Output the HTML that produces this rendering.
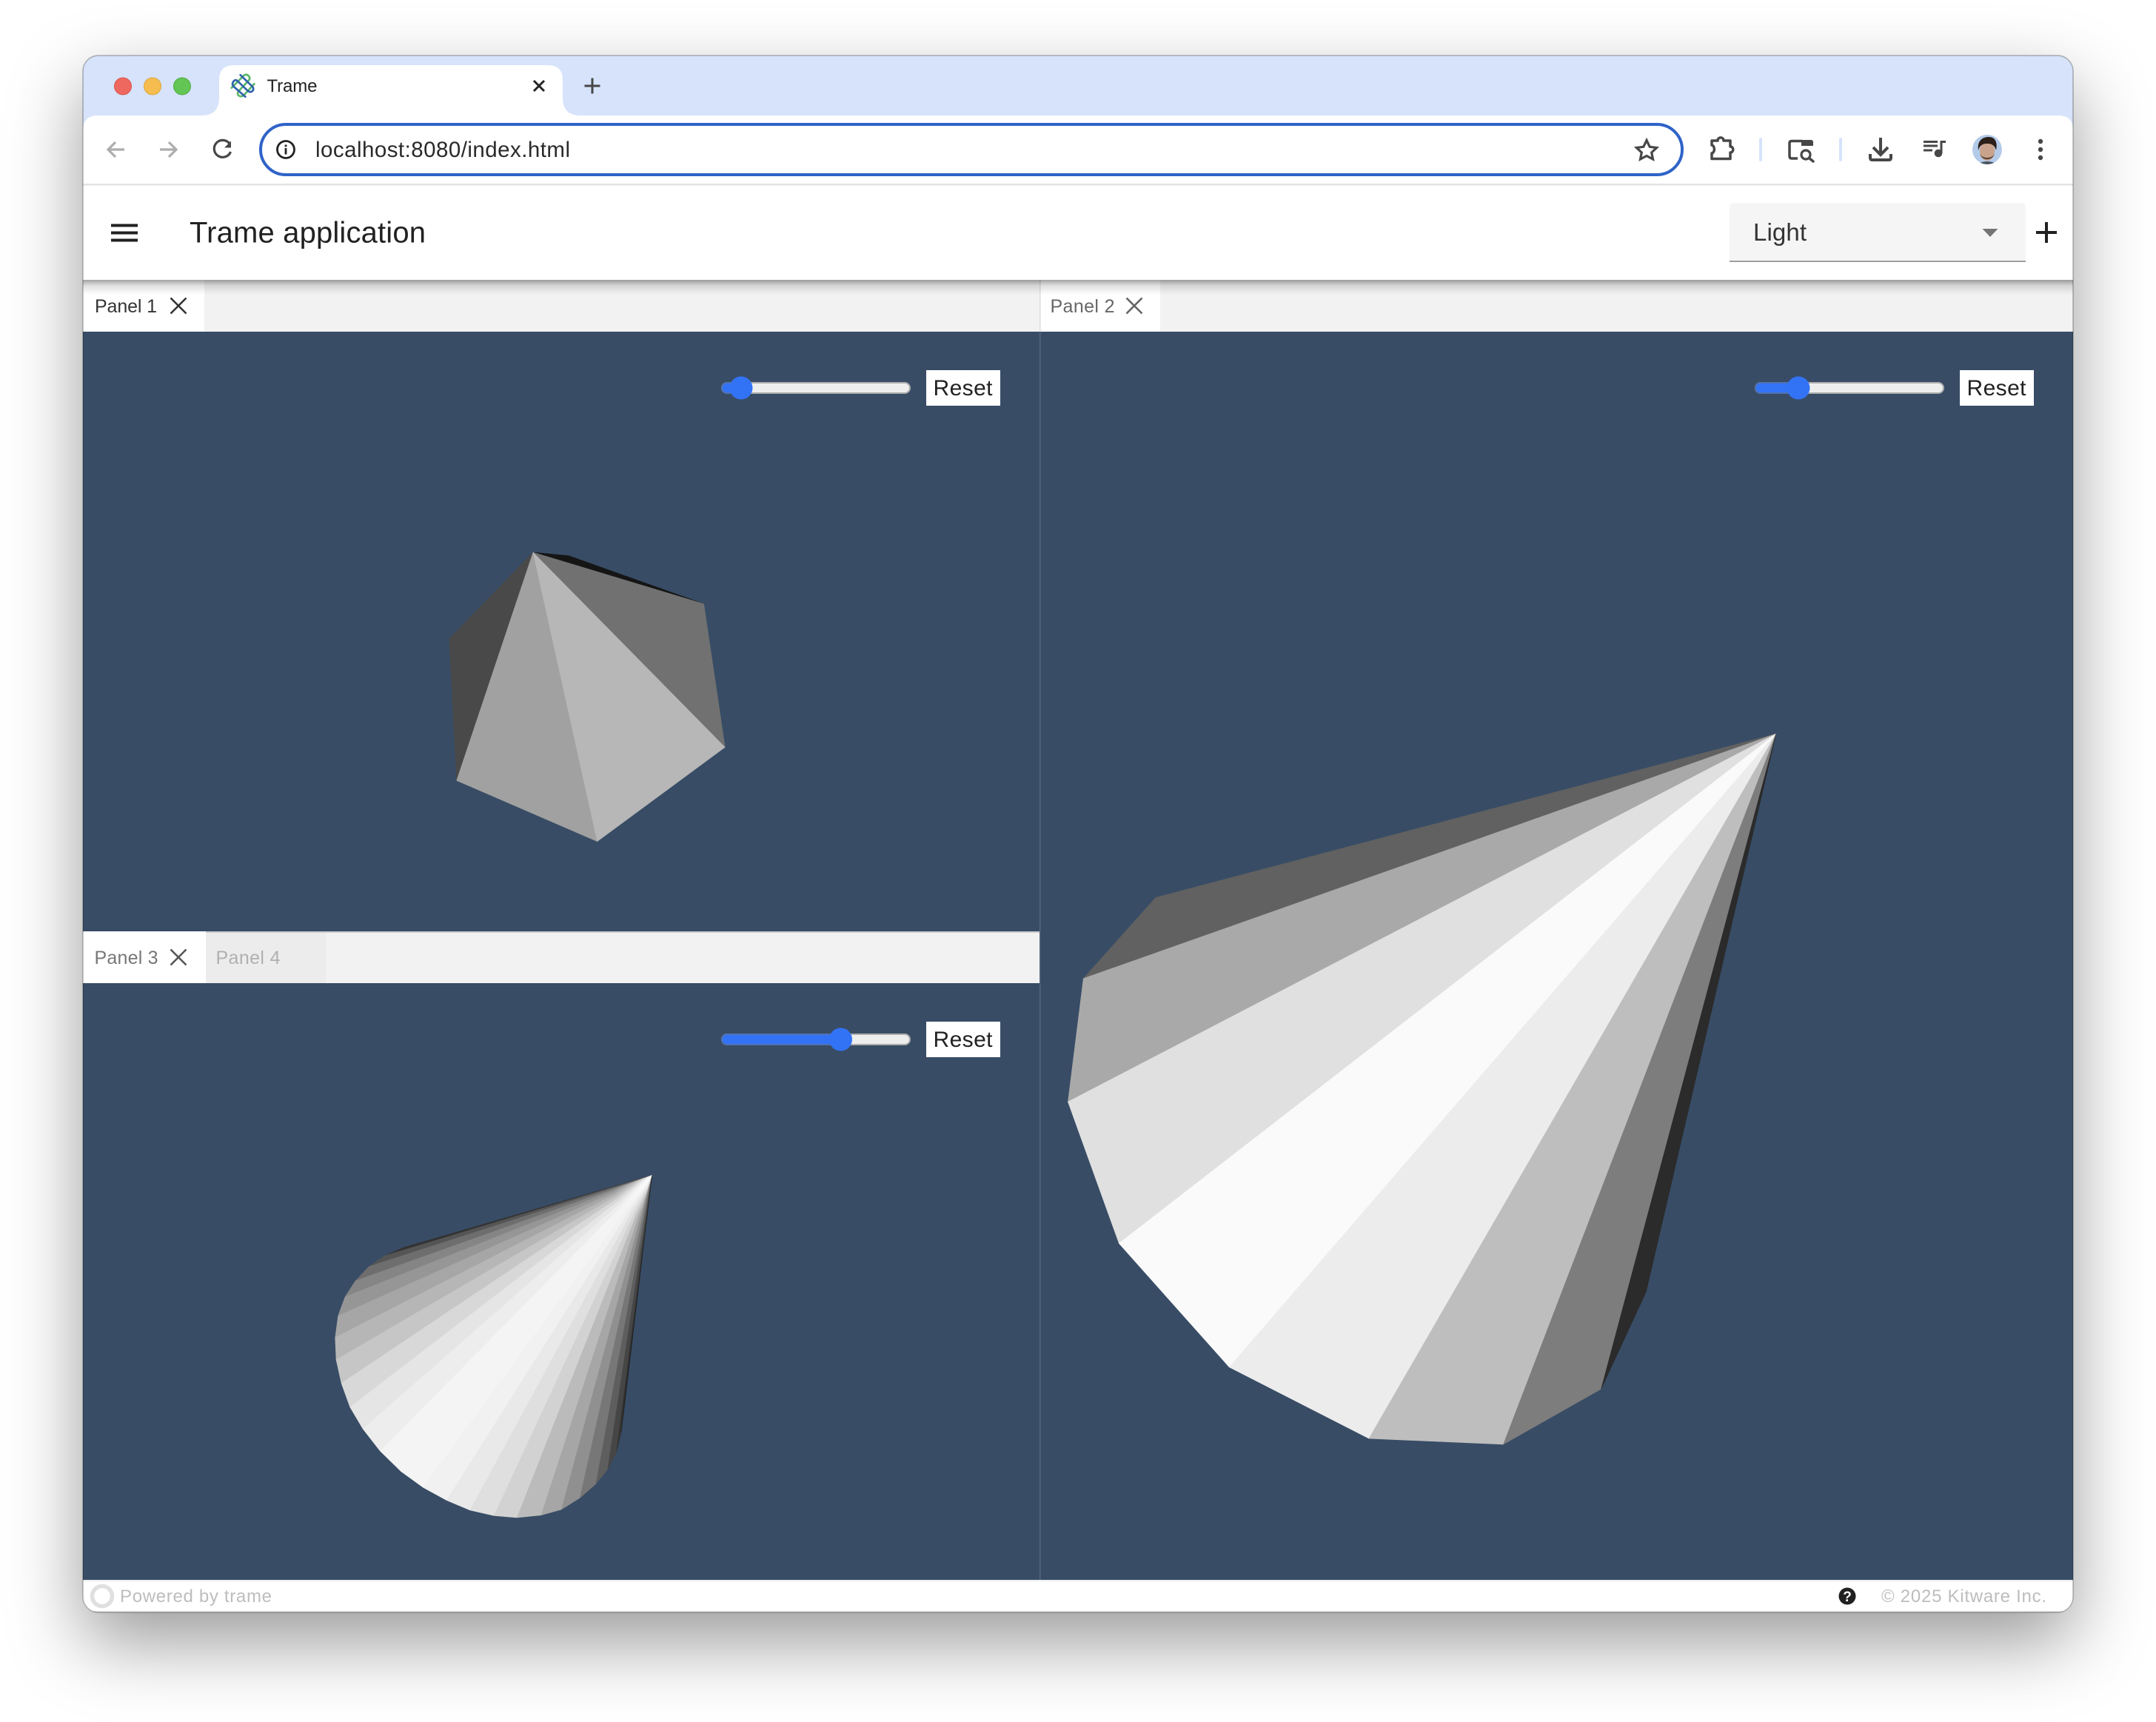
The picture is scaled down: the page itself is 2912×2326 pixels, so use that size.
<!DOCTYPE html>
<html lang="en"><head><meta charset="utf-8"><title>Trame</title>
<style>
html,body{margin:0;padding:0;background:#fff;width:2912px;height:2326px;overflow:hidden}
#sh{position:absolute;left:112px;top:75px;width:2688px;height:2103px;border-radius:20px;box-shadow:0 40px 100px 0 rgba(0,0,0,.4)}
svg{position:absolute;left:0;top:0;display:block}
text{font-family:"Liberation Sans",sans-serif}
</style></head><body>
<div id="sh"></div>
<svg width="2912" height="2326" viewBox="0 0 2912 2326" xmlns="http://www.w3.org/2000/svg">
<defs>
<clipPath id="win"><rect x="112" y="75" width="2688" height="2103" rx="21"/></clipPath>
<linearGradient id="ab" x1="0" y1="0" x2="0" y2="1"><stop offset="0" stop-color="#000" stop-opacity=".36"/><stop offset=".4" stop-color="#000" stop-opacity=".12"/><stop offset="1" stop-color="#000" stop-opacity="0"/></linearGradient>
<radialGradient id="apex" gradientUnits="userSpaceOnUse" cx="1352" cy="82" r="170"><stop offset="0" stop-color="#fff" stop-opacity=".9"/><stop offset=".5" stop-color="#fff" stop-opacity=".3"/><stop offset="1" stop-color="#fff" stop-opacity="0"/></radialGradient>
<clipPath id="ac"><circle cx="2684" cy="202" r="20"/></clipPath>
</defs>
<g clip-path="url(#win)">
<rect x="112" y="75" width="2688" height="2103" fill="#d6e3fa"/>
<!-- toolbar -->
<path d="M112 176 Q112 156 132 156 H2780 Q2800 156 2800 176 V250 H112 Z" fill="#fff"/>
<rect x="112" y="248" width="2688" height="2.5" fill="#e3e3e3"/>
<!-- tab -->
<path d="M272 156 Q296 156 296 132 V108 Q296 88 316 88 H740 Q760 88 760 108 V132 Q760 156 784 156 Z" fill="#fff"/>
<!-- traffic lights -->
<circle cx="166" cy="116.500" r="11.500" fill="#ee685f" stroke="#d9564e" stroke-width="1"/>
<circle cx="206" cy="116.500" r="11.500" fill="#f5bd4f" stroke="#dfa53c" stroke-width="1"/>
<circle cx="246" cy="116.500" r="11.500" fill="#62c554" stroke="#50ad45" stroke-width="1"/>
<!-- favicon -->
<g transform="translate(300 80) scale(.3333)" fill="none" stroke-width="8" stroke-linecap="round">
<path d="M38 116 L88 66 Q98 58 108 68 Q116 78 106 88 L68 128 Q58 140 68 148 Q78 154 88 146 L130 100" stroke="#5bb765"/>
<path d="M74 64 L124 112 Q130 122 122 130 Q114 136 104 128 L62 88 Q54 80 46 90 Q38 100 46 110 L94 152" stroke="#2f62ad"/>
</g>
<text x="360.500" y="124" font-size="24" fill="#222" textLength="68">Trame</text>
<path d="M721 109 L735 123 M735 109 L721 123" stroke="#222" stroke-width="3" fill="none"/>
<path d="M800 105.500 V126.500 M789.500 116 H810.500" stroke="#474747" stroke-width="3" fill="none"/>
<!-- nav -->
<path d="M168 202 H146 M156 192 L146 202 L156 212" stroke="#adadad" stroke-width="3.200" fill="none"/>
<path d="M216 202 H238 M228 192 L238 202 L228 212" stroke="#adadad" stroke-width="3.200" fill="none"/>
<path d="M310 194 A11.500 11.500 0 1 0 311.500 205" stroke="#474747" stroke-width="3.200" fill="none"/>
<path d="M312 190.500 V199.500 H303 Z" fill="#474747"/>
<!-- url -->
<rect x="352" y="168" width="1920" height="68" rx="34" fill="#fff" stroke="#2f63c9" stroke-width="4"/>
<circle cx="386" cy="202" r="11.500" fill="none" stroke="#222" stroke-width="2.800"/>
<rect x="384.600" y="200" width="2.800" height="8.500" fill="#222"/><rect x="384.600" y="195.500" width="2.800" height="2.800" fill="#222"/>
<text x="426" y="212" font-size="29.500" fill="#2a2a2a" textLength="344">localhost:8080/index.html</text>
<path d="M2224 189.500 L2228.200 198.300 L2237.600 199.500 L2230.700 206 L2232.500 215 L2224 210.500 L2215.500 215 L2217.300 206 L2210.400 199.500 L2219.800 198.300 Z" fill="none" stroke="#474747" stroke-width="3.200" stroke-linejoin="miter"/>
<!-- toolbar icons -->
<path d="M2312 190 H2320 C2320 184.500 2328 184.500 2328 190 H2337 V198 C2342 198 2342 206 2337 206 V214.500 H2312 V207 C2316.500 206 2316.500 197 2312 196 Z" fill="none" stroke="#474747" stroke-width="3.500" stroke-linejoin="round"/>
<rect x="2376" y="186" width="4" height="32" rx="2" fill="#d6e3fa"/>
<path d="M2428 214 H2420 Q2417 214 2417 211 V193 Q2417 190.500 2420 190.500 H2434" fill="none" stroke="#474747" stroke-width="3.500"/>
<path d="M2433 189 H2446 Q2449 189 2449 192 V197 H2433 Z" fill="#474747"/>
<circle cx="2439" cy="209" r="6" fill="none" stroke="#474747" stroke-width="3.200"/>
<path d="M2443.500 213.500 L2449 218" stroke="#474747" stroke-width="3.500" stroke-linecap="round"/>
<rect x="2484" y="186" width="4" height="32" rx="2" fill="#d6e3fa"/>
<path d="M2540 186 V208 M2530 199 L2540 209 L2550 199" fill="none" stroke="#474747" stroke-width="4"/>
<path d="M2526 208 V213 Q2526 216 2529 216 H2551 Q2554 216 2554 213 V208" fill="none" stroke="#474747" stroke-width="4"/>
<path d="M2598 191.500 H2617 M2598 197 H2617 M2598 203 H2610" stroke="#474747" stroke-width="3" fill="none"/>
<circle cx="2618" cy="207" r="5.300" fill="#474747"/>
<path d="M2622 207 V191.500 H2628" fill="none" stroke="#474747" stroke-width="3"/>
<g clip-path="url(#ac)">
<rect x="2664" y="182" width="40" height="40" fill="#b4cae9"/>
<ellipse cx="2684" cy="204" rx="10" ry="13" fill="#c9a38c"/>
<path d="M2672 203 C2670 188 2680 185 2686 185 C2696 185 2698 194 2696 203 C2694 196 2690 194 2684 194 C2678 194 2674 196 2672 203 Z" fill="#2a2019"/>
<path d="M2674 207 C2676 218 2692 218 2694 207 C2692 215 2676 215 2674 207 Z" fill="#5a4535"/>
<path d="M2670 222 Q2684 214 2698 222 Z" fill="#4a5561"/>
</g>
<circle cx="2756" cy="191" r="3.200" fill="#474747"/><circle cx="2756" cy="202" r="3.200" fill="#474747"/><circle cx="2756" cy="213" r="3.200" fill="#474747"/>
<!-- app bar -->
<rect x="112" y="250.500" width="2688" height="128" fill="#fff"/>
<path d="M150 302.500 H186 V306.500 H150 Z M150 312.500 H186 V316.500 H150 Z M150 322.500 H186 V326.500 H150 Z" fill="#212121"/>
<text x="256" y="327.500" font-size="40" fill="#212121" textLength="319">Trame application</text>
<path d="M2336 282 Q2336 274 2344 274 H2728 Q2736 274 2736 282 V354 H2336 Z" fill="#f5f5f5"/>
<rect x="2336" y="352" width="400" height="2" fill="#9e9e9e"/>
<text x="2368" y="325" font-size="33" fill="#333" textLength="72">Light</text>
<path d="M2677.500 309 H2698.500 L2688 320 Z" fill="#757575"/>
<path d="M2764 300 V328 M2750 314 H2778" stroke="#212121" stroke-width="4" fill="none"/>
<!-- panels -->
<rect x="112" y="378" width="2688" height="70" fill="#f2f2f2"/>
<rect x="112" y="378" width="164" height="70" fill="#fff"/>
<rect x="1405" y="378" width="162" height="70" fill="#fff"/>
<rect x="1404" y="378" width="1.500" height="70" fill="#ddd"/>
<text x="128" y="422" font-size="25" fill="#333" textLength="84">Panel 1</text>
<path d="M230.500 402.500 L251.500 423.500 M251.500 402.500 L230.500 423.500" stroke="#333" stroke-width="2.600" fill="none"/>
<text x="1418.500" y="422" font-size="25" fill="#666" textLength="87">Panel 2</text>
<path d="M1521.500 402.500 L1542.500 423.500 M1542.500 402.500 L1521.500 423.500" stroke="#666" stroke-width="2.600" fill="none"/>
<rect x="112" y="378" width="2688" height="20" fill="url(#ab)"/>
<rect x="112" y="448" width="2688" height="1686" fill="#384c65"/>
<rect x="1404" y="448" width="1.500" height="1686" fill="#54667c"/>
<!-- panel 3 tabs -->
<rect x="112" y="1258" width="1292" height="70" fill="#f2f2f2"/>
<rect x="112" y="1258" width="1292" height="2" fill="#cbcbcb"/>
<rect x="112" y="1258" width="166" height="70" fill="#fff"/>
<rect x="278" y="1260" width="162" height="68" fill="#ececec"/>
<text x="127.500" y="1302" font-size="25" fill="#777" textLength="86">Panel 3</text>
<path d="M230.500 1282.500 L251.500 1303.500 M251.500 1282.500 L230.500 1303.500" stroke="#555" stroke-width="2.600" fill="none"/>
<text x="291.500" y="1302" font-size="25" fill="#b0b0b0" textLength="87">Panel 4</text>
<!-- sliders -->
<g id="s1">
<rect x="975" y="517" width="254" height="14" rx="7" fill="#eee" stroke="#adadad" stroke-width="2"/>
<path d="M982 517 H1001 V531 H982 A7 7 0 0 1 982 517 Z" fill="#3273f6" stroke="#4f72b4" stroke-width="2"/>
<circle cx="1001" cy="524" r="15.500" fill="#3273f6"/>
<rect x="1251" y="500" width="100" height="48" fill="#fff"/>
<text x="1260.500" y="534" font-size="30" fill="#222" textLength="80">Reset</text>
</g>
<g transform="translate(1396 0)">
<rect x="975" y="517" width="254" height="14" rx="7" fill="#eee" stroke="#adadad" stroke-width="2"/>
<path d="M982 517 H1033 V531 H982 A7 7 0 0 1 982 517 Z" fill="#3273f6" stroke="#4f72b4" stroke-width="2"/>
<circle cx="1033" cy="524" r="15.500" fill="#3273f6"/>
<rect x="1251" y="500" width="100" height="48" fill="#fff"/>
<text x="1260.500" y="534" font-size="30" fill="#222" textLength="80">Reset</text>
</g>
<g transform="translate(0 880)">
<rect x="975" y="517" width="254" height="14" rx="7" fill="#eee" stroke="#adadad" stroke-width="2"/>
<path d="M982 517 H1135 V531 H982 A7 7 0 0 1 982 517 Z" fill="#3273f6" stroke="#4f72b4" stroke-width="2"/>
<circle cx="1135.500" cy="524" r="15.500" fill="#3273f6"/>
<rect x="1251" y="500" width="100" height="48" fill="#fff"/>
<text x="1260.500" y="534" font-size="30" fill="#222" textLength="80">Reset</text>
</g>
<!-- panel 1 shape -->
<g transform="translate(560 720) scale(.33333)" stroke-width="1.500" stroke-linejoin="round">
<polygon points="480,78 1172,287 625,92" fill="#151515" stroke="#151515"/>
<polygon points="480,78 140,428 170,1003" fill="#494949" stroke="#494949"/>
<polygon points="480,78 1258,868 1172,287" fill="#717171" stroke="#717171"/>
<polygon points="480,78 170,1003 740,1250" fill="#a1a1a1" stroke="#a1a1a1"/>
<polygon points="480,78 740,1250 1258,868" fill="#b7b7b7" stroke="#b7b7b7"/>
</g>
<!-- panel 2 shape -->
<g transform="translate(1421 960) scale(.6506)" stroke-width="1" stroke-linejoin="round">
<polygon points="1503,48 215,388 65,556" fill="#616161" stroke="#616161"/>
<polygon points="1503,48 65,556 33,812" fill="#a9a9a9" stroke="#a9a9a9"/>
<polygon points="1503,48 33,812 139,1106" fill="#e0e0e0" stroke="#e0e0e0"/>
<polygon points="1503,48 139,1106 368,1363" fill="#fafafa" stroke="#fafafa"/>
<polygon points="1503,48 368,1363 658,1511" fill="#ececec" stroke="#ececec"/>
<polygon points="1503,48 658,1511 937,1523" fill="#bebebe" stroke="#bebebe"/>
<polygon points="1503,48 937,1523 1140,1408" fill="#7d7d7d" stroke="#7d7d7d"/>
<polygon points="1503,48 1140,1408 1233,1207" fill="#2b2b2b" stroke="#2b2b2b"/>
</g>
<!-- panel 3 shape -->
<g transform="translate(430 1560) scale(.33333)" stroke-width="1.500" stroke-linejoin="round">
<polygon points="1352,82 345,375 270,408" fill="#333" stroke="#333"/>
<polygon points="1352,82 270,408 205,452" fill="#555" stroke="#555"/>
<polygon points="1352,82 205,452 150,510" fill="#6e6e6e" stroke="#6e6e6e"/>
<polygon points="1352,82 150,510 108,575" fill="#858585" stroke="#858585"/>
<polygon points="1352,82 108,575 80,652" fill="#969696" stroke="#969696"/>
<polygon points="1352,82 80,652 68,740" fill="#a6a6a6" stroke="#a6a6a6"/>
<polygon points="1352,82 68,740 72,830" fill="#b6b6b6" stroke="#b6b6b6"/>
<polygon points="1352,82 72,830 93,925" fill="#c6c6c6" stroke="#c6c6c6"/>
<polygon points="1352,82 93,925 128,1022" fill="#d8d8d8" stroke="#d8d8d8"/>
<polygon points="1352,82 128,1022 180,1110" fill="#e5e5e5" stroke="#e5e5e5"/>
<polygon points="1352,82 180,1110 250,1200" fill="#ededed" stroke="#ededed"/>
<polygon points="1352,82 250,1200 335,1283" fill="#f4f4f4" stroke="#f4f4f4"/>
<polygon points="1352,82 335,1283 425,1348" fill="#f4f4f4" stroke="#f4f4f4"/>
<polygon points="1352,82 425,1348 520,1400" fill="#f1f1f1" stroke="#f1f1f1"/>
<polygon points="1352,82 520,1400 615,1440" fill="#e9e9e9" stroke="#e9e9e9"/>
<polygon points="1352,82 615,1440 712,1462" fill="#dfdfdf" stroke="#dfdfdf"/>
<polygon points="1352,82 712,1462 805,1470" fill="#d2d2d2" stroke="#d2d2d2"/>
<polygon points="1352,82 805,1470 903,1460" fill="#bbb" stroke="#bbb"/>
<polygon points="1352,82 903,1460 985,1437" fill="#a6a6a6" stroke="#a6a6a6"/>
<polygon points="1352,82 985,1437 1060,1390" fill="#909090" stroke="#909090"/>
<polygon points="1352,82 1060,1390 1125,1333" fill="#777" stroke="#777"/>
<polygon points="1352,82 1125,1333 1172,1275" fill="#5e5e5e" stroke="#5e5e5e"/>
<polygon points="1352,82 1172,1275 1208,1205" fill="#464646" stroke="#464646"/>
<polygon points="1352,82 1208,1205 1228,1120" fill="#333" stroke="#333"/>
<polygon points="1352,82 1228,1120 1240,1000" fill="#222" stroke="#222"/>
<path d="M1352 82 L1190 140 L1300 260 Z" fill="url(#apex)"/>
</g>
<!-- footer -->
<rect x="112" y="2134" width="2688" height="44" fill="#fff"/>
<rect x="112" y="2134" width="2688" height="2" fill="#eee"/>
<rect x="112" y="2176" width="2688" height="2" fill="#ddd"/>
<circle cx="138" cy="2156" r="13.500" fill="none" stroke="#e0e0e0" stroke-width="5.500"/>
<text x="162" y="2164" font-size="24" fill="#bdbdbd" textLength="205">Powered by trame</text>
<circle cx="2495" cy="2156" r="11.500" fill="#212121"/>
<text x="2495" y="2163" font-size="19" font-weight="bold" fill="#fff" text-anchor="middle">?</text>
<text x="2541" y="2164" font-size="24" fill="#bdbdbd" textLength="223">© 2025 Kitware Inc.</text>
</g>
<rect x="112" y="75" width="2688" height="2103" rx="21" fill="none" stroke="#000" stroke-opacity=".28" stroke-width="1.500"/>
</svg>
</body></html>
